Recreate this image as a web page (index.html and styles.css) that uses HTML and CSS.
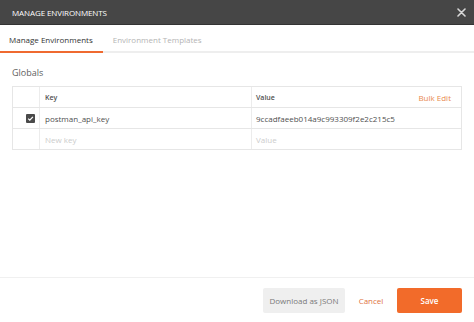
FILE: index.html
```html
<!DOCTYPE html>
<html>
<head>
<meta charset="utf-8">
<link rel="stylesheet" href="styles.css">
</head>
<body>
<div class="modal">
  <div class="header">
    <span class="title">MANAGE ENVIRONMENTS</span>
    <svg class="close" width="9" height="9" viewBox="0 0 9 9"><path d="M1 1L8 8M8 1L1 8" stroke="#d8d8d8" stroke-width="1.6" stroke-linecap="round"/></svg>
  </div>
  <div class="tabs">
    <div class="tab active">Manage Environments</div>
    <div class="tab">Environment Templates</div>
  </div>
  <div class="content">
    <div class="section-title">Globals</div>
    <div class="kv">
      <div class="row head">
        <div class="cell check"></div>
        <div class="cell key">Key</div>
        <div class="cell value">Value<span class="bulk">Bulk Edit</span></div>
      </div>
      <div class="row">
        <div class="cell check"><span class="checkbox"><svg width="9" height="9" viewBox="0 0 9 9"><path d="M2.2 4.6L3.8 6.1L6.9 2.9" fill="none" stroke="#fff" stroke-width="1.3"/></svg></span></div>
        <div class="cell key">postman_api_key</div>
        <div class="cell value">9ccadfaeeb014a9c993309f2e2c215c5</div>
      </div>
      <div class="row last">
        <div class="cell check"></div>
        <div class="cell key placeholder">New key</div>
        <div class="cell value placeholder">Value</div>
      </div>
    </div>
  </div>
  <div class="footer">
    <button class="btn secondary">Download as JSON</button>
    <button class="btn link">Cancel</button>
    <button class="btn primary">Save</button>
  </div>
</div>
</body>
</html>
```
FILE: styles.css
```css
html, body {
  margin: 0;
  padding: 0;
  background: #fff;
}
body {
  font-family: "Open Sans", "Liberation Sans", sans-serif;
  font-size: 8px;
  color: #505050;
}
.modal {
  width: 474px;
  height: 322px;
  display: flex;
  flex-direction: column;
}
.header {
  height: 24px;
  background: #464646;
  border-bottom: 1px solid #333;
  display: flex;
  align-items: center;
  justify-content: space-between;
  padding: 0 8px 0 12px;
}
.title {
  color: #fff;
  font-size: 8px;
  letter-spacing: -0.1px;
}
.close {
  display: block;
}
.tabs {
  height: 26px;
  display: flex;
  border-bottom: 2px solid #eeeeee;
}
.tab {
  padding: 0 10px;
  display: flex;
  align-items: center;
  padding-top: 3px;
  color: #b4b4b4;
  font-size: 8px;
  border-bottom: 2px solid transparent;
  margin-bottom: -2px;
}
.tab.active {
  color: #333;
  padding-left: 9px;
  border-bottom-color: #ef6a30;
}
.content {
  flex: 1;
  padding: 14px 12px 0 12px;
}
.section-title {
  font-size: 9px;
  color: #606060;
  line-height: 12px;
  margin-bottom: 7px;
}
.kv {
  border: 1px solid #e6e6e6;
  border-bottom: none;
}
.row {
  display: grid;
  grid-template-columns: 27px 212px 1fr;
  height: 20px;
  border-bottom: 1px solid #e6e6e6;
}
.cell {
  display: flex;
  align-items: center;
  border-right: 1px solid #ececec;
  padding-left: 5px;
}
.cell.value {
  border-right: none;
  padding-left: 4px;
  justify-content: space-between;
  padding-right: 10px;
}
.cell.check {
  padding-left: 13px;
}
.head .cell {
  font-size: 7px;
  font-weight: 600;
  color: #505050;
}
.bulk {
  color: #e98a4e;
  font-size: 8px;
  font-weight: 400;
}
.checkbox {
  width: 9px;
  height: 9px;
  background: #4a4a4a;
  border-radius: 1px;
  display: block;
}
.checkbox svg {
  display: block;
}
.placeholder {
  color: #cccccc;
}
.footer {
  height: 45px;
  border-top: 1px solid #f0f0f0;
  display: flex;
  align-items: center;
  justify-content: flex-end;
  padding: 0 12px 0 0;
  box-sizing: border-box;
}
.btn {
  font-family: "Open Sans", "Liberation Sans", sans-serif;
  font-size: 8px;
  height: 25px;
  border: none;
  border-radius: 2px;
  padding: 0;
  margin: 0;
  cursor: pointer;
}
.btn.secondary {
  width: 82px;
  background: #efefef;
  color: #7a7a7a;
}
.btn.link {
  background: transparent;
  color: #de7442;
  width: 52px;
}
.btn.primary {
  width: 65px;
  background: #f26b2a;
  color: #fff;
  font-weight: 600;
}
```
